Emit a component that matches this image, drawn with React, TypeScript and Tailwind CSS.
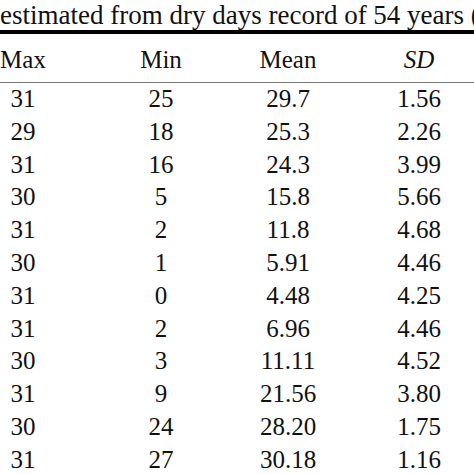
const rows = [
  ["31", "25", "29.7", "1.56"],
  ["29", "18", "25.3", "2.26"],
  ["31", "16", "24.3", "3.99"],
  ["30", "5", "15.8", "5.66"],
  ["31", "2", "11.8", "4.68"],
  ["30", "1", "5.91", "4.46"],
  ["31", "0", "4.48", "4.25"],
  ["31", "2", "6.96", "4.46"],
  ["30", "3", "11.11", "4.52"],
  ["31", "9", "21.56", "3.80"],
  ["30", "24", "28.20", "1.75"],
  ["31", "27", "30.18", "1.16"],
];

const cols = "grid grid-cols-[138px_138px_116px_146px] ml-[-46px]";

export default function App() {
  return (
    <div className="w-[474px] h-[474px] overflow-hidden bg-white text-[#111] font-['Liberation_Serif','Times_New_Roman',serif]">
      <div className="whitespace-nowrap text-[27px] leading-[30px]">
        estimated from dry days record of 54 years (
      </div>
      <div className="h-[4px] bg-black" />
      <div className={`${cols} text-[25px] leading-[25px] pt-[13px] pb-[10px] border-b border-[#777] text-center`}>
        <div>Max</div>
        <div>Min</div>
        <div>Mean</div>
        <div className="italic">SD</div>
      </div>
      {rows.map((r, i) => (
        <div key={i} className={`${cols} text-[25px] leading-[32.8px] text-center`}>
          {r.map((v, j) => (
            <div key={j}>{v}</div>
          ))}
        </div>
      ))}
    </div>
  );
}
